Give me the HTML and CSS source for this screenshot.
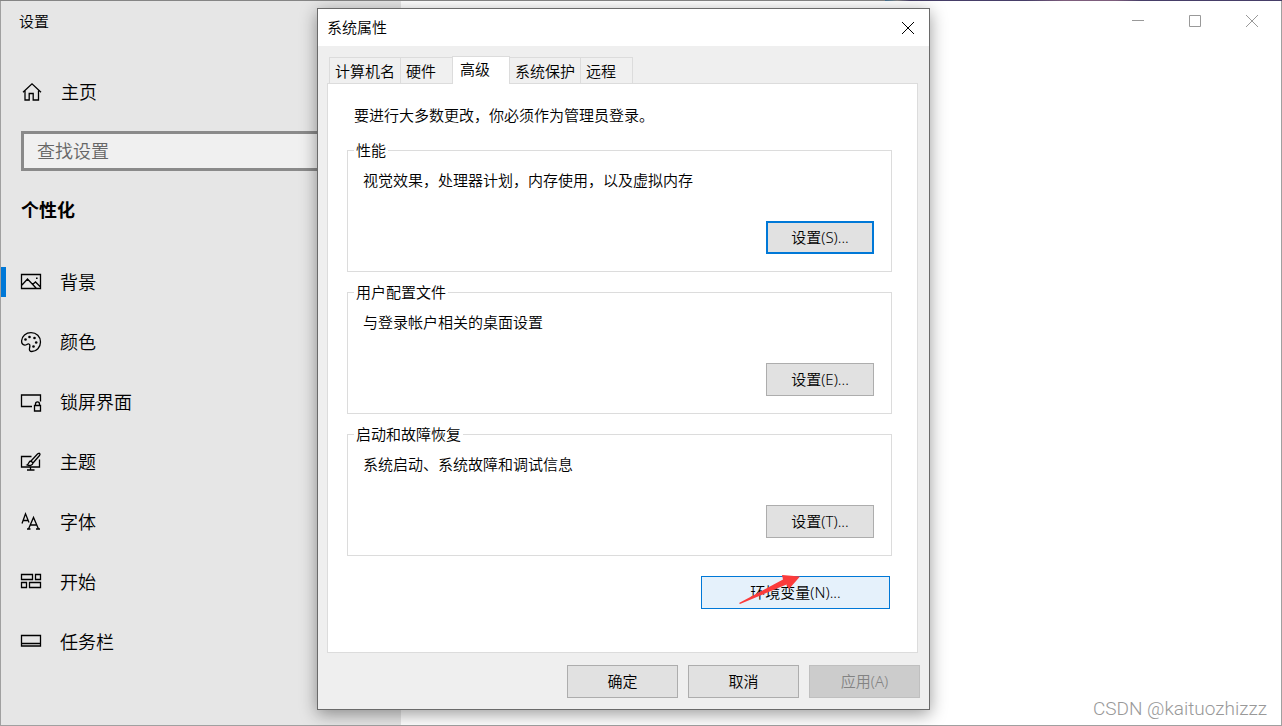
FILE: index.html
```html
<!DOCTYPE html>
<html lang="zh-CN">

<head>
  <meta charset="UTF-8">
  <meta name="viewport" content="width=device-width, initial-scale=1">
  <title>设置</title>
  <link rel="stylesheet" href="styles.css">
</head>

<body>
  <div class="desktop-strip"></div>
  <div class="window">
    <aside class="sidebar">
      <h1 class="app-title">设置</h1>
      <a class="nav-link home" href="#home">
        <svg class="icon" viewBox="0 0 22 22"><path d="M3 11.2 12 2.8l9 8.4M5 9.8V19h4.2v-6.500h4V19h5.300V9.800"/></svg>
        主页
      </a>
      <input class="search" type="text" placeholder="查找设置" aria-label="查找设置">
      <h2 class="category">个性化</h2>
      <nav>
        <a class="nav-link active" href="#background">
          <svg class="icon" viewBox="0 0 22 22"><path d="M1.5 3.5h19v14h-19zM2 14l5.5-6 9 9.5M12.5 13.5l3-2.5 5 5"/><path class="solid" d="M16 6.5h1.6v1.6H16z"/></svg>
          背景
        </a>
        <a class="nav-link" href="#colors">
          <svg class="icon" viewBox="0 0 22 22"><path d="M1.6 9.800C1.800 5 6 1.600 11 1.600c5.400 0 9.500 4 9.500 9.400 0 5.300-4 9.500-8.700 9.500-2 0-2.700-1.300-2.300-3.200.5-2.200 1-3.700-.5-4.300-1.600-.7-2.500 1.300-4.200 1.100C2.700 13.900 1.500 12.200 1.600 9.800z"/><g class="solid"><circle cx="5.500" cy="8.500" r="1.300"/><circle cx="9.500" cy="6" r="1.300"/><circle cx="14.500" cy="7" r="1.300"/><circle cx="16.200" cy="11.500" r="1.300"/><circle cx="13.500" cy="15.500" r="1.300"/></g></svg>
          颜色
        </a>
        <a class="nav-link" href="#lock">
          <svg class="icon" viewBox="0 0 22 22"><path d="M12 15.500H1.500v-11.500h19v6.500M14.500 14.500h6v5.500h-6zM15.500 14.500v-1.500a2 2.200 0 0 1 4 0v1.500"/></svg>
          锁屏界面
        </a>
        <a class="nav-link" href="#themes">
          <svg class="icon" viewBox="0 0 22 22"><path d="M11.500 5.500h-10v10.500h18v-7.500M10.500 16v3M7 19h7.500"/><path d="M11 10 17.500 3q1.500-1.300 2.300-.3.600.9-.5 2.100L13 12M11 10c-2.500 0-2 3-4 4 2.500 1 5.700.5 6-2z"/></svg>
          主题
        </a>
        <a class="nav-link" href="#fonts">
          <svg class="icon" viewBox="0 0 22 22"><path d="M2 12.500 5.500 2.800l3.500 8.700M3.500 9.500h4.500M8.500 18l5-11.500L18.500 18M10.500 14h6M7 18h3.500M16 18h4"/></svg>
          字体
        </a>
        <a class="nav-link" href="#start">
          <svg class="icon" viewBox="0 0 22 22"><path d="M1.500 3.500h11v5h-11zM15.500 3.500h5v5h-5zM1.500 11.500h5v5h-5zM9.500 11.500h11v5h-11z"/></svg>
          开始
        </a>
        <a class="nav-link" href="#taskbar">
          <svg class="icon" viewBox="0 0 22 22"><path d="M1.500 4.500h19v10.500h-19zM1.500 12.500h19"/></svg>
          任务栏
        </a>
      </nav>
    </aside>

    <main class="content">
      <div class="window-controls">
        <button type="button" aria-label="最小化"><svg viewBox="0 0 14 14"><path d="M1 6.500h12"/></svg></button>
        <button type="button" aria-label="最大化"><svg viewBox="0 0 14 14"><path d="M1.500 1.500h11v11h-11z"/></svg></button>
        <button type="button" aria-label="关闭"><svg viewBox="0 0 14 14"><path d="M1 1l12 12M13 1 1 13"/></svg></button>
      </div>
    </main>
  </div>

  <div class="dialog" role="dialog" aria-labelledby="dialog-title">
    <header class="dialog-header">
      <h2 id="dialog-title">系统属性</h2>
      <button type="button" aria-label="关闭"><svg viewBox="0 0 14 14"><path d="M1 1l12 12M13 1 1 13"/></svg></button>
    </header>

    <div class="tabs" role="tablist">
      <button type="button" class="tab" role="tab">计算机名</button>
      <button type="button" class="tab" role="tab">硬件</button>
      <button type="button" class="tab selected" role="tab" aria-selected="true">高级</button>
      <button type="button" class="tab" role="tab">系统保护</button>
      <button type="button" class="tab" role="tab">远程</button>
    </div>

    <div class="panel" role="tabpanel">
      <p class="notice">要进行大多数更改，你必须作为管理员登录。</p>
      <fieldset class="group">
        <legend>性能</legend>
        <p>视觉效果，处理器计划，内存使用，以及虚拟内存</p>
        <button type="button" class="btn default">设置(S)...</button>
      </fieldset>
      <fieldset class="group">
        <legend>用户配置文件</legend>
        <p>与登录帐户相关的桌面设置</p>
        <button type="button" class="btn">设置(E)...</button>
      </fieldset>
      <fieldset class="group">
        <legend>启动和故障恢复</legend>
        <p>系统启动、系统故障和调试信息</p>
        <button type="button" class="btn">设置(T)...</button>
      </fieldset>
      <button type="button" class="btn env">
        环境变量(N)...
        <svg class="arrow" viewBox="0 0 62 30"><path d="M0 28 44 4.500 43 0 61 1.500 50 14 47.500 9.500 1 29z"/></svg>
      </button>
    </div>

    <footer class="dialog-footer">
      <button type="button" class="btn">确定</button>
      <button type="button" class="btn">取消</button>
      <button type="button" class="btn" disabled>应用(A)</button>
    </footer>
  </div>

  <div class="watermark">CSDN @kaituozhizzz</div>
</body>

</html>
```
FILE: styles.css
```css
*,
*::before,
*::after {
  box-sizing: border-box;
  margin: 0;
  padding: 0;
}

:root {
  --accent: #0078d7;
  --line: #dcdcdc;
  --frame: #a0a0a0;
}

body {
  display: flex;
  flex-direction: column;
  position: relative;
  min-height: 100vh;
  font-family: "Noto Sans", "Noto Sans CJK SC", sans-serif;
  font-size: 15px;
  font-weight: 350;
  line-height: 20px;
  color: #000;
  background: #fff;
}

button,
input {
  font: inherit;
  color: inherit;
}

svg {
  fill: none;
  stroke: currentColor;
}

/* Settings window */

.desktop-strip {
  height: 1px;
  background: linear-gradient(to right, #858585 69%, #3f6f92 69%, #858585 70%, #463e68 71%, #463e68 80%, #7d5d7c 83%, #7d5d7c 87%, #463e68 89%);
}

.window {
  flex: 1;
  display: flex;
  border: 1px solid var(--frame);
  border-top: none;
}

.sidebar {
  width: 400px;
  flex-shrink: 0;
  background: #e6e6e6;
}

.app-title {
  padding: 10px 18px;
  font-size: 15px;
  font-weight: 350;
}

.nav-link {
  display: flex;
  align-items: center;
  gap: 18px;
  height: 60px;
  padding-left: 19px;
  font-size: 18px;
  color: #000;
  text-decoration: none;
}

.nav-link.home {
  gap: 19px;
  margin-top: 21px;
}

.nav-link.active::before {
  content: "";
  width: 5px;
  height: 30px;
  margin-left: -19px;
  margin-right: -4px;
  background: var(--accent);
}

.icon {
  width: 22px;
  height: 22px;
  stroke-width: 1.3;
}

.icon .solid {
  fill: currentColor;
  stroke: none;
}

.search {
  display: block;
  width: 360px;
  height: 40px;
  margin: 9px 20px 0;
  padding: 0 13px;
  border: 3px solid #8a8a8a;
  background: #f0f0f0;
  font-size: 18px;
}

.search::placeholder {
  color: #666;
  opacity: 1;
}

.category {
  margin: 29px 0 32px 20px;
  font-size: 18px;
  line-height: 20px;
}

.content {
  flex: 1;
}

.window-controls {
  display: flex;
  justify-content: flex-end;
  padding-right: 1px;
  color: #999;
}

.window-controls button,
.dialog-header button {
  display: grid;
  place-items: center;
  height: 40px;
  width: 57px;
  border: none;
  background: none;
}

.window-controls svg,
.dialog-header svg {
  width: 14px;
  height: 14px;
}

/* System properties dialog */

.dialog {
  position: absolute;
  left: 317px;
  top: 8px;
  width: 613px;
  border: 1px solid #6a6a6a;
  background: #efefef;
  box-shadow: 0 4px 16px rgba(0, 0, 0, 0.4);
}

.dialog-header {
  display: flex;
  align-items: center;
  justify-content: space-between;
  height: 37px;
  padding-left: 9px;
  background: #fff;
}

.dialog-header h2 {
  padding-bottom: 2px;
  font-size: 15px;
  font-weight: 350;
}

.dialog-header button {
  width: 42px;
  height: 37px;
}

.tabs {
  display: flex;
  align-items: flex-end;
  padding: 10px 11px 0;
}

.tab {
  min-width: 53px;
  height: 26px;
  margin-left: -1px;
  padding: 0 5px;
  border: 1px solid var(--line);
  border-bottom: none;
  background: #f0f0f0;
  text-align: left;
}

.tab:first-child {
  margin-left: 0;
}

.tab.selected {
  z-index: 1;
  width: 58px;
  height: 28px;
  margin-bottom: -1px;
  padding: 0 7px 4px;
  background: #fff;
}

.panel {
  display: flex;
  flex-direction: column;
  gap: 10px;
  margin: 0 11px 0 9px;
  padding: 21px 25px 43px 19px;
  border: 1px solid var(--line);
  background: #fff;
}

.notice {
  margin-bottom: 5px;
  padding-left: 7px;
}

.group {
  display: flex;
  flex-direction: column;
  padding: 10px 17px 17px 6px;
  border: 1px solid var(--line);
}

.group legend {
  padding: 0 2px;
}

.group p {
  margin-bottom: 31px;
  padding-left: 9px;
}

.btn {
  height: 33px;
  min-width: 108px;
  padding-bottom: 2px;
  border: 1px solid #adadad;
  background: #e1e1e1;
  text-align: center;
}

.group .btn {
  align-self: flex-end;
}

.btn.default {
  border: 2px solid var(--accent);
}

.btn.env {
  position: relative;
  align-self: flex-end;
  width: 189px;
  margin: 10px 2px 0 0;
  border: 1px solid var(--accent);
  background: #e5f1fb;
}

.btn:disabled {
  border-color: #bfbfbf;
  background: #ccc;
  color: #838383;
}

.arrow {
  position: absolute;
  left: 37px;
  top: -2px;
  width: 62px;
  height: 30px;
  fill: #fb3b3b;
  stroke: none;
}

.dialog-footer {
  display: flex;
  justify-content: flex-end;
  gap: 10px;
  padding: 12px 9px 11px;
}

.dialog-footer .btn {
  width: 111px;
}

.watermark {
  position: absolute;
  right: 15px;
  bottom: 5px;
  font-family: Roboto, sans-serif;
  font-size: 19px;
  line-height: 24px;
  color: #999;
}
```
